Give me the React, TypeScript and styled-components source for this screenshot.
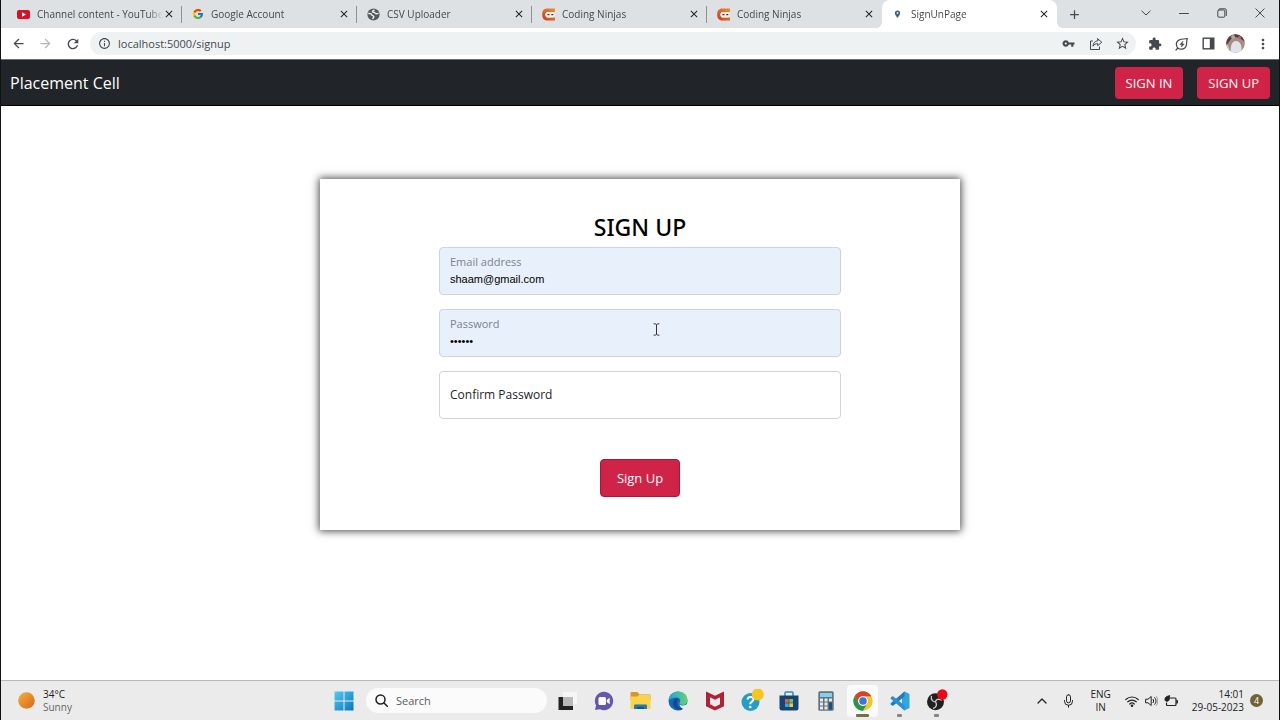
import React from "react";
import styled, { createGlobalStyle } from "styled-components";
import {
  MdAdd,
  MdArrowBack,
  MdArrowForward,
  MdClose,
  MdExtension,
  MdInfoOutline,
  MdMoreVert,
  MdRefresh,
  MdStarBorder,
  MdVpnKey,
} from "react-icons/md";
import { FcGoogle } from "react-icons/fc";

const GlobalStyle = createGlobalStyle`
  * { box-sizing: border-box; }
  body {
    margin: 0;
    background: #fff;
    color: #212529;
    font-family: "Open Sans", "Noto Sans", sans-serif;
    font-size: 12px;
  }
  button, input { font: inherit; color: inherit; }
  svg { display: block; flex: none; }
`;

const Screen = styled.div`
  display: flex;
  flex-direction: column;
  min-height: 100vh;
  border: solid #111;
  border-width: 0 1px;
`;

/* Browser chrome */

const TabStrip = styled.div`
  display: flex;
  height: 28px;
  padding-left: 6px;
  background: #dde1e4;
`;

const Tab = styled.div<{ $active?: boolean; $divider?: boolean }>`
  position: relative;
  display: flex;
  align-items: center;
  flex: 0 1 175px;
  min-width: 0;
  padding: 0 8px 0 10px;
  background: ${(p) => (p.$active ? "#fff" : "transparent")};
  border-radius: 8px 8px 0 0;

  &::after {
    content: "";
    display: ${(p) => (p.$divider ? "block" : "none")};
    position: absolute;
    right: 0;
    top: 6px;
    width: 1px;
    height: 17px;
    background: #8f9396;
  }
`;

const TabFlare = styled.span<{ $side: "left" | "right" }>`
  position: absolute;
  bottom: 0;
  ${(p) => p.$side}: -6px;
  width: 6px;
  height: 6px;
  background: radial-gradient(
    circle at ${(p) => p.$side} top,
    transparent 6px,
    #fff 6px
  );
`;

const TabTitle = styled.span`
  flex: 1;
  min-width: 0;
  margin-left: 7px;
  overflow: hidden;
  white-space: nowrap;
  font-size: 10px;
  line-height: 16px;
  color: #45494d;
  mask-image: linear-gradient(to right, #000 88%, transparent);
`;

const IconButton = styled.button<{ $width?: number; $color?: string }>`
  display: flex;
  align-items: center;
  justify-content: center;
  flex: none;
  width: ${(p) => p.$width ?? 27}px;
  height: 100%;
  padding: 0;
  border: 0;
  background: none;
  color: ${(p) => p.$color ?? "#45494d"};
`;

const WindowControls = styled.div`
  display: flex;
  height: 26px;
  margin-left: auto;
`;

const Toolbar = styled.div`
  display: flex;
  align-items: center;
  height: 32px;
  padding: 4px 3px 4px 4px;
  border-bottom: 1px solid #6d7072;
  background: #fff;
`;

const AddressBar = styled.div`
  display: flex;
  align-items: center;
  flex: 1;
  height: 23px;
  margin: 0 5px 0 4px;
  padding-left: 8px;
  gap: 7px;
  border-radius: 12px;
  background: #eff2f3;
`;

const AddressInput = styled.input`
  flex: 1;
  min-width: 0;
  padding: 0;
  border: 0;
  outline: 0;
  background: none;
  font-size: 11px;
  line-height: 18px;
  color: #45494d;
`;

const AddressActions = styled.div`
  display: flex;
  height: 100%;
`;

/* Placement Cell site */

const NavBar = styled.header`
  display: flex;
  align-items: center;
  justify-content: space-between;
  height: 46px;
  padding: 0 9px;
  border-bottom: 1px solid #000;
  background: #212529;
`;

const Brand = styled.a`
  color: #fff;
  font-size: 16px;
  line-height: 24px;
  text-decoration: none;
`;

const NavLinks = styled.nav`
  display: flex;
  gap: 14px;
`;

const NavButton = styled.button`
  height: 32px;
  padding: 0 11px;
  border: 0;
  border-radius: 4px;
  background: #d02348;
  color: #fff;
  font-size: 13px;
  line-height: 20px;
`;

const Main = styled.main`
  display: flex;
  flex: 1;
  flex-direction: column;
  align-items: center;
  padding: 73px 16px 32px;
`;

const Card = styled.form`
  display: flex;
  flex-direction: column;
  align-items: center;
  width: 640px;
  max-width: 100%;
  padding: 34px 16px 33px;
  background: #fff;
  box-shadow: 0 0 8px 1px #444;
`;

const Title = styled.h1`
  margin: 0 0 6px;
  font-family: "Noto Sans", "Open Sans", sans-serif;
  font-size: 23px;
  font-weight: 500;
  line-height: 28px;
  color: #000;
`;

const Fields = styled.div`
  display: flex;
  flex-direction: column;
  gap: 14px;
  width: 402px;
  max-width: 100%;
`;

const Field = styled.div<{ $filled?: boolean }>`
  position: relative;
  display: flex;
  flex-direction: ${(p) => (p.$filled ? "column" : "row")};
  align-items: ${(p) => (p.$filled ? "stretch" : "center")};
  height: 48px;
  padding: 6px 10px;
  border: 1px solid #ced4da;
  border-radius: 4px;
  background: ${(p) => (p.$filled ? "#e8f0fc" : "#fff")};
`;

const FieldLabel = styled.label<{ $filled?: boolean }>`
  font-size: ${(p) => (p.$filled ? 11 : 12)}px;
  line-height: 16px;
  color: ${(p) => (p.$filled ? "#7b838c" : "#212529")};
`;

const FieldInput = styled.input`
  flex: 1;
  min-width: 0;
  height: 18px;
  padding: 0;
  border: 0;
  outline: 0;
  background: none;
  font-family: "Liberation Sans", sans-serif;
  font-size: 11px;
  line-height: 18px;
  color: #000;
`;

const TextCursor = styled.svg`
  position: absolute;
  left: 213px;
  top: 13px;
`;

const SubmitButton = styled.button`
  height: 38px;
  margin-top: 40px;
  padding: 0 16px;
  border: 1px solid #a01c3a;
  border-radius: 4px;
  background: #d02348;
  color: #fff;
  font-size: 13px;
  line-height: 20px;
`;

/* Desktop taskbar */

const Taskbar = styled.footer`
  display: grid;
  grid-template-columns: 1fr auto 1fr;
  align-items: center;
  height: 40px;
  border-top: 1px solid #b9b9b9;
  background: #ebebeb;
`;

const Weather = styled.div`
  display: flex;
  align-items: center;
  gap: 8px;
  padding-left: 17px;
`;

const SmallLines = styled.div<{ $align?: string }>`
  font-size: 10px;
  line-height: 13px;
  text-align: ${(p) => p.$align ?? "left"};
  color: #222;
`;

const Muted = styled.div`
  color: #666;
`;

const Apps = styled.div`
  display: flex;
  align-items: center;
  height: 38px;
`;

const AppButton = styled.button<{ $mark?: "active" | "open" }>`
  position: relative;
  display: flex;
  align-items: center;
  justify-content: center;
  width: 37px;
  height: 32px;
  padding: 0;
  border: 0;
  background: none;

  &::before {
    content: "";
    position: absolute;
    inset: 0 3px;
    border-radius: 4px;
    background: ${(p) => (p.$mark === "active" ? "#fafafa" : "none")};
  }
  &::after {
    content: "";
    position: absolute;
    bottom: 0;
    width: ${(p) => (p.$mark === "active" ? 13 : p.$mark ? 5 : 0)}px;
    height: 3px;
    border-radius: 1px;
    background: ${(p) => (p.$mark === "active" ? "#77704a" : "#858585")};
  }
  svg { position: relative; }
`;

const SearchBox = styled.label`
  display: flex;
  align-items: center;
  gap: 8px;
  width: 181px;
  height: 25px;
  margin: 0 1px 0 4px;
  padding: 0 9px;
  border-radius: 13px;
  background: #fbfbfb;
`;

const SearchInput = styled.input`
  flex: 1;
  min-width: 0;
  padding: 0;
  border: 0;
  outline: 0;
  background: none;
  font-size: 11px;
  line-height: 18px;
  &::placeholder { color: #5c5c5c; opacity: 1; }
`;

const Tray = styled.div`
  display: flex;
  align-items: center;
  justify-content: flex-end;
  padding-right: 16px;
  color: #222;
`;

const Language = styled.div`
  margin-left: 8px;
`;

const TrayGroup = styled.div`
  display: flex;
  align-items: center;
  gap: 6px;
  margin: 0 14px;
`;

const Count = styled.span`
  width: 13px;
  height: 13px;
  margin-left: 6px;
  border-radius: 50%;
  background: #6f6236;
  color: #fff;
  font-size: 9px;
  line-height: 13px;
  text-align: center;
`;

/* Tab icons */

const YoutubeIcon = () => (
  <svg width="13" height="13" viewBox="0 0 13 13">
    <rect y="2" width="13" height="9" rx="2" fill="#d90f25" />
    <path d="M5 4.3 9 6.5 5 8.7z" fill="#fff" />
  </svg>
);

const GlobeIcon = () => (
  <svg width="13" height="13" viewBox="0 0 13 13">
    <circle cx="6.5" cy="6.5" r="6.1" fill="#55595c" />
    <path
      d="M1.2 5.600c1.800-.2 3.400.2 3.700 1.300.3.9 1.800.5 1.900 1.600.1 1-1 1.300-.9 2.600M7.500 1.800c-.9.7-2.300.8-2 1.800.4 1 2.200.2 2.500 1.300.3 1.200 1.900 1 3.500.5"
      fill="none"
      stroke="#e8ebed"
      strokeWidth="1.500"
    />
  </svg>
);

const NinjaIcon = () => (
  <svg width="13" height="13" viewBox="0 0 13 13">
    <defs>
      <linearGradient id="ninja" x1="0" x2="1" y1="1" y2="0">
        <stop offset="0" stopColor="#c63a22" />
        <stop offset="1" stopColor="#ef9233" />
      </linearGradient>
    </defs>
    <path
      d="M13 .5H5.500C1.800.5.2 2.800.2 6.500s1.600 6 5.300 6H13V9.600H6.500C4.600 9.600 3.500 8.700 3.500 6.700s1.100-2.700 3-2.700H13z"
      fill="url(#ninja)"
    />
    <rect x="3.500" y="4" width="9" height="5.400" rx="2.200" fill="#f8efe8" />
    <path d="M5.500 6.600h2M9.300 6.600h2" stroke="#4a2a20" strokeWidth="1.200" />
  </svg>
);

const PinIcon = () => (
  <svg width="12" height="12" viewBox="0 0 12 12">
    <path d="M5.500 2.500a2.600 2.600 0 0 1 2.600 2.700C8.100 7 5.500 9.800 5.500 9.800S2.900 7 2.900 5.200a2.600 2.600 0 0 1 2.600-2.700z" fill="#486580" />
    <circle cx="5.500" cy="5" r=".9" fill="#dce9f2" />
  </svg>
);

/* Toolbar icons */

const line = { fill: "none", stroke: "currentColor", strokeLinecap: "round", strokeLinejoin: "round" } as const;

const ShareIcon = () => (
  <svg width="14" height="14" viewBox="0 0 14 14" {...line}>
    <path d="M3.500 4H1.500v8.500h9V10" />
    <path d="M8.700 1.800 12.800 5.200 8.700 8.600V6.700C6.500 6.600 5 7.500 4 9.200c.2-3 1.700-5.100 4.700-5.500z" />
  </svg>
);

const LeafIcon = () => (
  <svg width="14" height="14" viewBox="0 0 14 14" {...line} strokeWidth="1.200">
    <path d="M12.300 1.500c-2.500.7-5.200.3-7.600 1.200C1.900 3.800 1 6.300 1.600 8.600c.7 2.600 3.200 3.900 5.600 3.500 2.600-.4 4-2.500 4.300-4.700.3-2.200.1-4 .8-5.900zM1 13l1.800-2" />
    <path d="M7.800 4.500 5 7.500h2l-.6 2.500L9.200 7h-2z" fill="currentColor" strokeWidth=".6" />
  </svg>
);

const SidePanelIcon = () => (
  <svg width="13" height="13" viewBox="0 0 13 13">
    <rect x="1.200" y="1.200" width="10.600" height="10.600" fill="none" stroke="currentColor" strokeWidth="1.400" />
    <rect x="7.800" y="1.200" width="4" height="10.600" fill="currentColor" />
  </svg>
);

const AvatarIcon = () => (
  <svg width="19" height="19" viewBox="0 0 19 19">
    <clipPath id="avatar"><circle cx="9.500" cy="9.500" r="9.300" /></clipPath>
    <g clipPath="url(#avatar)">
      <rect width="19" height="19" fill="#a58d86" />
      <path d="M0 0h19v8l-4-3-5-2-5 2-5 7z" fill="#5b3a36" />
      <circle cx="7" cy="3" r="2" fill="#b3a6a4" />
      <circle cx="13.500" cy="3.500" r="1.500" fill="#9c7b70" />
      <path d="M5 19c-1-6 .5-12 5-12s6.500 5 5 12z" fill="#e2e3ea" />
      <path d="M0 10c2 0 3 3 4 9H0z" fill="#d3c7c2" />
    </g>
  </svg>
);

const CaretIcon = () => (
  <svg width="10" height="10" viewBox="0 0 10 10" {...line}><path d="m.8 3 4.200 4 4.200-4" /></svg>
);
const MinimizeIcon = () => (
  <svg width="10" height="10" viewBox="0 0 10 10" {...line}><path d="M.5 5.500h9" /></svg>
);
const RestoreIcon = () => (
  <svg width="10" height="10" viewBox="0 0 10 10" {...line}>
    <rect x=".8" y="2" width="7" height="7.200" rx="1" />
    <path d="M2.500.8H8A1.300 1.300 0 0 1 9.300 2v5.500" />
  </svg>
);
const ExitIcon = () => (
  <svg width="10" height="10" viewBox="0 0 10 10" {...line}><path d="m.8.8 8.400 8.400M9.200.8.8 9.200" /></svg>
);

/* Taskbar icons */

const SunIcon = () => (
  <svg width="17" height="17" viewBox="0 0 17 17">
    <defs>
      <linearGradient id="sun" x1="0" x2="1" y1="0" y2="1">
        <stop offset="0" stopColor="#f0b23a" />
        <stop offset="1" stopColor="#dc641c" />
      </linearGradient>
    </defs>
    <circle cx="8.500" cy="8.500" r="8.300" fill="url(#sun)" />
  </svg>
);

const StartIcon = () => (
  <svg width="20" height="20" viewBox="0 0 20 20">
    <defs>
      <linearGradient id="start" x1="0" x2="20" y1="0" y2="20" gradientUnits="userSpaceOnUse">
        <stop offset="0" stopColor="#55cdf3" />
        <stop offset="1" stopColor="#0873bd" />
      </linearGradient>
    </defs>
    <path d="M.5.5h9v9h-9zM10.500.5h9v9h-9zM.5 10.500h9v9h-9zM10.500 10.500h9v9h-9z" fill="url(#start)" />
  </svg>
);

const SearchIcon = () => (
  <svg width="13" height="13" viewBox="0 0 13 13" {...line} stroke="#222" strokeWidth="1.500">
    <circle cx="5.500" cy="5.500" r="4.500" />
    <path d="m9 9 3.300 3.300" />
  </svg>
);

const TaskViewIcon = () => (
  <svg width="20" height="20" viewBox="0 0 20 20">
    <rect x="6" y="1" width="14" height="12" fill="#f6f6f6" />
    <path d="M1.500 6h14.500v13H1.500z" fill="#222" />
    <rect x="6" y="6" width="10" height="9" fill="#b9b9b9" />
  </svg>
);

const ChatIcon = () => (
  <svg width="20" height="20" viewBox="0 0 20 20">
    <path d="M10 .8a9.200 9.200 0 1 1-4 17.500L1 19l1-4.500A9.200 9.200 0 0 1 10 .8z" fill="#6557ab" />
    <rect x="4.500" y="6" width="7.500" height="8" rx="1.500" fill="#fff" />
    <path d="m12.700 9 3-2.300v6.600l-3-2.300z" fill="#fff" />
  </svg>
);

const FolderIcon = () => (
  <svg width="21" height="19" viewBox="0 0 21 19">
    <path d="M.5 2a1 1 0 0 1 1-1h6l2 2.500h10a1 1 0 0 1 1 1V9H.5z" fill="#d49b22" />
    <path d="M.5 5.500h7L9 4h11.500v13a1 1 0 0 1-1 1h-18a1 1 0 0 1-1-1z" fill="#f8d34c" />
    <path d="M4 18v-3.500a1 1 0 0 1 1-1h11a1 1 0 0 1 1 1V18z" fill="#2079b5" />
    <path d="M7 16h7v2H7z" fill="#125483" />
  </svg>
);

const EdgeIcon = () => (
  <svg width="20" height="20" viewBox="0 0 20 20">
    <defs>
      <linearGradient id="edge-top" x1="0" x2="1">
        <stop offset="0" stopColor="#21a4dc" />
        <stop offset="1" stopColor="#65d36c" />
      </linearGradient>
    </defs>
    <circle cx="10" cy="10" r="9.500" fill="#1668b4" />
    <path d="M.5 9.500C1 4 5.200.5 10.200.5c5.300 0 9.300 4 9.300 8.400 0 3.100-2.100 5-4.900 5-2.500 0-3.500-1-3-1.900 1.800-3-.3-5.500-3-5.500C4.500 6.500 1.500 8 .5 9.500z" fill="url(#edge-top)" />
    <path d="M8 7.500c-3.500 1-4.500 7.500.5 10.500 2 1.200 5 1.200 7.500-1-5 1.500-9-3.500-6-7.500.8-1-.5-2.200-2-2z" fill="#154991" />
    <path d="M11.700 11.700c-1 1.700 1 2.800 3 2.800 1.900 0 3.500-.7 5.300-2v3c-1 1.300-2 2-4 2.600-2.500-.5-5.300-3.500-4.300-6.400z" fill="#ebebeb" />
  </svg>
);

const ShieldIcon = () => (
  <svg width="20" height="20" viewBox="0 0 20 20">
    <path d="M1 .5 10 4.800 19 .5v14.800l-9 4.300-9-4.300zM5 6.200v7l5 2.500 5-2.500v-7L10 8.800z" fill="#b51f32" fillRule="evenodd" />
  </svg>
);

const HelpIcon = () => (
  <svg width="24" height="24" viewBox="0 0 24 24">
    <circle cx="10.500" cy="13" r="9" fill="#269dc3" />
    <path d="M7.500 10.500c.5-3.500 6.500-3.200 6 .2-.3 2-3.500 1.900-3.300 4.600" fill="none" stroke="#fff" strokeWidth="2" />
    <circle cx="10.200" cy="18" r="1.300" fill="#fff" />
    <circle cx="17.800" cy="5.500" r="6" fill="#f8c51f" />
  </svg>
);

const StoreIcon = () => (
  <svg width="20" height="20" viewBox="0 0 20 20">
    <path d="M6 5V2a1 1 0 0 1 1-1h6a1 1 0 0 1 1 1v3" fill="none" stroke="#2989c9" strokeWidth="1.500" />
    <path d="M.5 4.500h19V17a2.500 2.500 0 0 1-2.500 2.500H3A2.500 2.500 0 0 1 .5 17z" fill="#164573" />
    <path d="M6 8h3.700v3.700H6z" fill="#e2633b" />
    <path d="M10.300 8H14v3.700h-3.700z" fill="#7fc04a" />
    <path d="M6 12.300h3.700V16H6z" fill="#38a9df" />
    <path d="M10.300 12.300H14V16h-3.700z" fill="#f4c63e" />
  </svg>
);

const CalculatorIcon = () => (
  <svg width="16" height="20" viewBox="0 0 16 20">
    <rect x=".3" y=".3" width="15.400" height="19.400" rx="1.500" fill="#65727c" />
    <rect x="2" y="2" width="12" height="4" fill="#7fd2ee" />
    <path d="M2 7.500h3v3H2zM6.500 7.500h3v3h-3zM11 7.500h3v3h-3zM2 11.500h3v3H2zM6.500 11.500h3v3h-3zM2 15.500h3v3H2zM6.500 15.500h3v3h-3z" fill="#e5eaed" />
    <path d="M11 11.500h3v7h-3z" fill="#164f83" />
  </svg>
);

const ChromeIcon = () => (
  <svg width="20" height="20" viewBox="0 0 20 20">
    <circle cx="10" cy="10" r="9.700" fill="#f4c52b" />
    <path d="M1.600 5.200A9.700 9.700 0 0 1 18.400 5.200H10a4.800 4.800 0 0 0-4.200 7.200z" fill="#d8402f" />
    <path d="M1.600 5.200A9.700 9.700 0 0 0 10 19.700l4.200-7.300a4.800 4.800 0 0 1-8.400 0z" fill="#249650" />
    <circle cx="10" cy="10" r="4.800" fill="#fff" />
    <circle cx="10" cy="10" r="3.800" fill="#3977dd" />
  </svg>
);

const CodeIcon = () => (
  <svg width="20" height="20" viewBox="0 0 20 20">
    <path d="M14.500.5 19.500 3v14l-5 2.500-2.500-2.300V2.800z" fill="#36a3e1" />
    <path d="M14.500.5v5L2.800 15 .7 13.500v-1.300z" fill="#207cb9" />
    <path d="M14.500 19.500v-5L2.800 5 .7 6.500v1.300z" fill="#2890d0" />
  </svg>
);

const ObsIcon = () => (
  <svg width="22" height="24" viewBox="0 0 22 24">
    <circle cx="9.500" cy="12.800" r="8.500" fill="#211f20" />
    <path d="M5.500 6.800c-1 4 1.500 6 4 6M15.800 11.300c-3.500-2.200-6-.6-6.300 1.500M7 19.300c3.500-.8 4.300-4 2.500-6.500" fill="none" stroke="#c9c9c9" strokeWidth="1.300" />
    <circle cx="16.300" cy="5.500" r="5.200" fill="#e60c14" />
  </svg>
);

const ChevronUpIcon = () => (
  <svg width="10" height="10" viewBox="0 0 10 10" {...line} strokeWidth="1.300"><path d="m1 7 4-4 4 4" /></svg>
);

const MicIcon = () => (
  <svg width="11" height="14" viewBox="0 0 11 14" {...line}>
    <rect x="3.500" y=".8" width="4" height="8" rx="2" />
    <path d="M1.500 6.500v.8a4 4 0 0 0 8 0v-.8M5.500 11.300v2" />
  </svg>
);

const WifiIcon = () => (
  <svg width="14" height="12" viewBox="0 0 14 12" {...line} strokeWidth="1.200">
    <path d="M.8 4.500a9 9 0 0 1 12.400 0M2.800 6.800a6 6 0 0 1 8.400 0M4.800 9a3.200 3.200 0 0 1 4.400 0" />
    <circle cx="7" cy="10.700" r=".7" fill="currentColor" />
  </svg>
);

const SpeakerIcon = () => (
  <svg width="13" height="12" viewBox="0 0 13 12" {...line}>
    <path d="M1 4.200h2L6.200 1.500v9L3 7.800H1zM8 4.300c.9 1 .9 2.400 0 3.400M9.700 2.700c1.800 1.900 1.800 4.700 0 6.600" />
    <path d="M11.300 1.500c2 2.600 2 6.400 0 9" strokeOpacity=".4" />
  </svg>
);

const BatteryIcon = () => (
  <svg width="14" height="12" viewBox="0 0 14 12" {...line} strokeWidth="1.200">
    <path d="M6 3h5a1 1 0 0 1 1 1v5.500a1 1 0 0 1-1 1H3.500a1 1 0 0 1-1-1V8M13.300 5.500V8" />
    <path d="M5.500.8C3 1 .8 2 .9 4.500c.1 1.500 1.300 2 2.300 1.900C5.500 6 5.800 3.500 5.500.8z" fill="currentColor" strokeWidth=".8" />
  </svg>
);

const tabs = [
  { title: "Channel content - YouTube", icon: <YoutubeIcon /> },
  { title: "Google Account", icon: <FcGoogle size={12} /> },
  { title: "CSV Uploader", icon: <GlobeIcon /> },
  { title: "Coding Ninjas", icon: <NinjaIcon /> },
  { title: "Coding Ninjas", icon: <NinjaIcon /> },
  { title: "SignUnPage", icon: <PinIcon />, active: true },
];

const apps: { name: string; icon: React.ReactNode; mark?: "active" | "open" }[] = [
  { name: "Task view", icon: <TaskViewIcon /> },
  { name: "Chat", icon: <ChatIcon /> },
  { name: "File Explorer", icon: <FolderIcon /> },
  { name: "Edge", icon: <EdgeIcon /> },
  { name: "McAfee", icon: <ShieldIcon /> },
  { name: "Get Help", icon: <HelpIcon /> },
  { name: "Store", icon: <StoreIcon /> },
  { name: "Calculator", icon: <CalculatorIcon /> },
  { name: "Chrome", icon: <ChromeIcon />, mark: "active" },
  { name: "Visual Studio Code", icon: <CodeIcon />, mark: "open" },
  { name: "OBS Studio", icon: <ObsIcon />, mark: "open" },
];

export default function App() {
  return (
    <>
      <GlobalStyle />
      <Screen>
        <TabStrip>
          {tabs.map((tab, i) => (
            <Tab key={i} $active={tab.active} $divider={i < 4}>
              {tab.active && <TabFlare $side="left" />}
              {tab.active && <TabFlare $side="right" />}
              {tab.icon}
              <TabTitle>{tab.title}</TabTitle>
              <IconButton $width={11} $color="#222" aria-label={`Close ${tab.title}`}>
                <MdClose size={12} />
              </IconButton>
            </Tab>
          ))}
          <IconButton $width={35} aria-label="New tab"><MdAdd size={15} /></IconButton>
          <WindowControls>
            <IconButton $width={38} aria-label="Search tabs"><CaretIcon /></IconButton>
            <IconButton $width={38} aria-label="Minimize"><MinimizeIcon /></IconButton>
            <IconButton $width={38} aria-label="Restore"><RestoreIcon /></IconButton>
            <IconButton $width={38} aria-label="Close window"><ExitIcon /></IconButton>
          </WindowControls>
        </TabStrip>
        <Toolbar>
          <IconButton aria-label="Back"><MdArrowBack size={15} /></IconButton>
          <IconButton $color="#b4b7b9" aria-label="Forward"><MdArrowForward size={15} /></IconButton>
          <IconButton aria-label="Reload"><MdRefresh size={16} /></IconButton>
          <AddressBar>
            <MdInfoOutline size={13} color="#45494d" />
            <AddressInput aria-label="Address" defaultValue="localhost:5000/signup" />
            <AddressActions>
              <IconButton aria-label="Passwords"><MdVpnKey size={13} /></IconButton>
              <IconButton aria-label="Share"><ShareIcon /></IconButton>
              <IconButton aria-label="Bookmark"><MdStarBorder size={15} /></IconButton>
            </AddressActions>
          </AddressBar>
          <IconButton aria-label="Extensions"><MdExtension size={14} /></IconButton>
          <IconButton aria-label="Energy saver"><LeafIcon /></IconButton>
          <IconButton aria-label="Side panel"><SidePanelIcon /></IconButton>
          <IconButton aria-label="Profile"><AvatarIcon /></IconButton>
          <IconButton aria-label="Menu"><MdMoreVert size={16} /></IconButton>
        </Toolbar>

        <NavBar>
          <Brand href="#">Placement Cell</Brand>
          <NavLinks>
            <NavButton>SIGN IN</NavButton>
            <NavButton>SIGN UP</NavButton>
          </NavLinks>
        </NavBar>

        <Main>
          <Card onSubmit={(e) => e.preventDefault()}>
            <Title>SIGN UP</Title>
            <Fields>
              <Field $filled>
                <FieldLabel $filled htmlFor="email">Email address</FieldLabel>
                <FieldInput id="email" type="email" defaultValue="shaam@gmail.com" />
              </Field>
              <Field $filled>
                <FieldLabel $filled htmlFor="password">Password</FieldLabel>
                <FieldInput id="password" type="password" defaultValue="secret" />
                <TextCursor width="7" height="13" viewBox="0 0 7 13" {...line} stroke="#333" aria-hidden="true">
                  <path d="M1 .8c1.500 0 2.500.2 2.500 1.200v9c0 1-1 1.200-2.500 1.200M6 .8c-1.500 0-2.500.2-2.500 1.200M6 12.200c-1.500 0-2.500-.2-2.500-1.200" />
                </TextCursor>
              </Field>
              <Field>
                <FieldLabel htmlFor="confirm">Confirm Password</FieldLabel>
                <FieldInput id="confirm" type="password" />
              </Field>
            </Fields>
            <SubmitButton type="submit">Sign Up</SubmitButton>
          </Card>
        </Main>

        <Taskbar>
          <Weather>
            <SunIcon />
            <SmallLines>
              <div>34°C</div>
              <Muted>Sunny</Muted>
            </SmallLines>
          </Weather>
          <Apps>
            <AppButton aria-label="Start"><StartIcon /></AppButton>
            <SearchBox>
              <SearchIcon />
              <SearchInput aria-label="Search" placeholder="Search" />
            </SearchBox>
            {apps.map((app) => (
              <AppButton key={app.name} $mark={app.mark} aria-label={app.name}>{app.icon}</AppButton>
            ))}
          </Apps>
          <Tray>
            <IconButton $color="#222" aria-label="Show hidden icons"><ChevronUpIcon /></IconButton>
            <IconButton $color="#222" aria-label="Microphone"><MicIcon /></IconButton>
            <Language>
              <SmallLines $align="center">
                <div>ENG</div>
                <div>IN</div>
              </SmallLines>
            </Language>
            <TrayGroup>
              <WifiIcon />
              <SpeakerIcon />
              <BatteryIcon />
            </TrayGroup>
            <SmallLines $align="right">
              <div>14:01</div>
              <div>29-05-2023</div>
            </SmallLines>
            <Count>4</Count>
          </Tray>
        </Taskbar>
      </Screen>
    </>
  );
}
